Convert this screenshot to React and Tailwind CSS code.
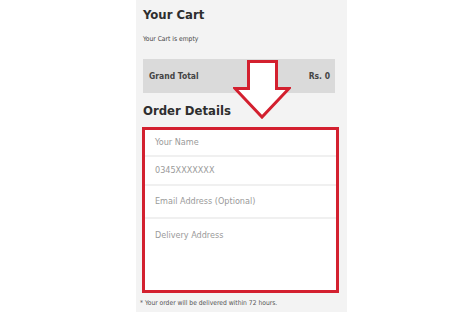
export default function App() {
  const font = {
    fontFamily:
      '"Liberation Sans Narrow", "DejaVu Sans Condensed", "Liberation Sans", sans-serif',
  };

  return (
    <div className="w-[474px] h-[318px] bg-white overflow-hidden" style={font}>
      <div className="relative ml-[136px] w-[211px] h-[312px] bg-[#f3f3f3] pl-[7px] pr-[12px] text-[#333]">
        {/* cart */}
        <h2 className="pt-[6px] text-[13px] leading-[17px] font-bold text-[#2e2e2e]">
          Your Cart
        </h2>
        <p className="mt-[11px] text-[6.7px] leading-[10px] text-[#444]">Your Cart is empty</p>

        <div className="mt-[15px] h-[34px] bg-[#dadada] flex items-center justify-between pl-[6px] pr-[5px] text-[8.5px] font-bold text-[#444]">
          <span>Grand Total</span>
          <span>Rs. 0</span>
        </div>

        <h2 className="mt-[9px] text-[13px] leading-[17px] font-bold text-[#2e2e2e]">
          Order Details
        </h2>

        {/* highlighted form */}
        <div className="mt-[8px] -ml-[1px] w-[197px] h-[166px] border-[3px] border-[#d3202f] bg-[#f0f0f0] flex flex-col gap-[2px] text-[9px] text-[#9a9a9a]">
          <div className="h-[25px] bg-white flex items-center pl-[10px]">Your Name</div>
          <div className="h-[27px] bg-white flex items-center pl-[10px]">0345XXXXXXX</div>
          <div className="h-[31px] bg-white flex items-center pl-[10px]">Email Address (Optional)</div>
          <div className="flex-1 bg-white pl-[10px] pt-[10px]">Delivery Address</div>
        </div>

        <p className="mt-[5px] -ml-[3px] text-[6.7px] leading-[10px] text-[#555]">
          * Your order will be delivered within 72 hours.
        </p>

        {/* arrow annotation */}
        <svg
          className="absolute left-[97px] top-[60px]"
          width="58"
          height="60"
          viewBox="0 0 58 60"
        >
          <path
            d="M15.5 1.5 H43.5 V28.5 H56 L29 57 L2 28.5 H15.5 Z"
            fill="white"
            stroke="#d3202f"
            strokeWidth="3"
            strokeLinejoin="miter"
          />
        </svg>
      </div>
    </div>
  );
}
